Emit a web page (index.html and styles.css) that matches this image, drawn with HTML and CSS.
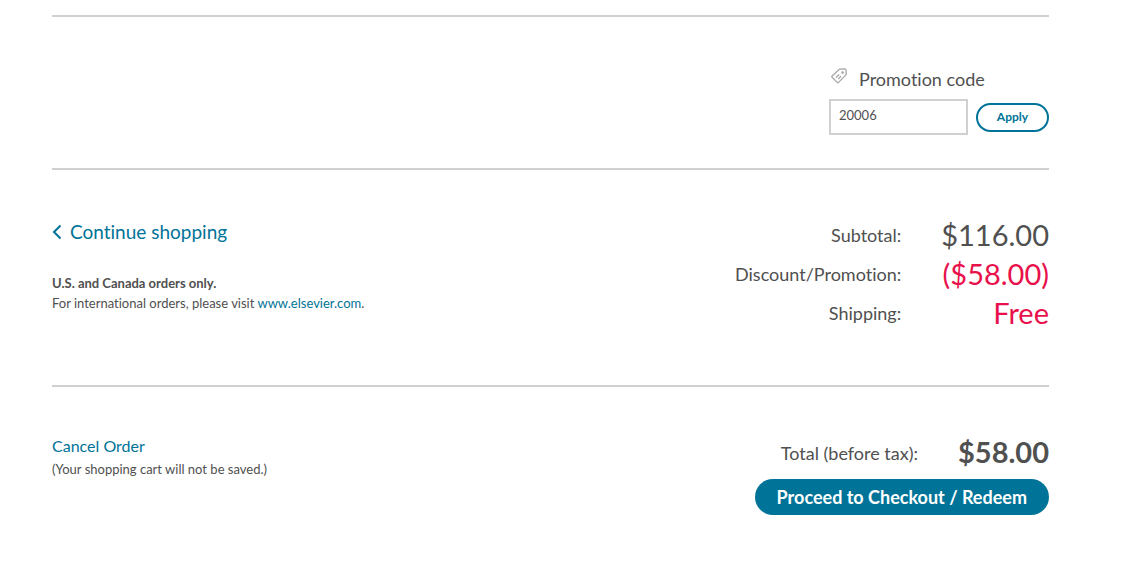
FILE: index.html
```html
<!DOCTYPE html>
<html lang="en">
<head>
    <meta charset="UTF-8">
    <title>Shopping Cart</title>
    <meta name="viewport" content="width=device-width, initial-scale=1">
    <link rel="stylesheet" href="styles.css">
</head>
<body>
<main class="cart">
    <form class="section promo">
        <div class="promo-box">
            <label class="promo-label" for="promo-code">
                <svg class="tag-icon" viewBox="0 0 16 16" aria-hidden="true">
                    <path d="M8.6 1.1 13.6.8Q14.9.8 15 2L15.2 6.6 7.6 14.4Q6.9 15.1 6.2 14.4L1.1 9.3Q.5 8.7 1.1 8Z"/>
                    <path d="M5 9.5 8.2 6.6M7.2 11 10 8.2"/>
                    <circle cx="11.6" cy="4.6" r=".7"/>
                </svg>
                Promotion code
            </label>
            <div class="promo-row">
                <input class="promo-input" type="text" id="promo-code" value="20006">
                <button class="apply-button" type="submit">Apply</button>
            </div>
        </div>
    </form>

    <section class="section summary">
        <div>
            <a class="continue" href="#">
                <svg class="chevron" viewBox="0 0 10 16" aria-hidden="true"><path d="M8.5 1.5 2 8l6.5 6.5"/></svg>
                Continue shopping
            </a>
            <p class="note"><strong>U.S. and Canada orders only.</strong><br>For international orders, please visit <a href="https://www.elsevier.com">www.elsevier.com</a>.</p>
        </div>
        <dl class="totals">
            <dt>Subtotal:</dt>
            <dd>$116.00</dd>
            <dt>Discount/Promotion:</dt>
            <dd class="saving">($58.00)</dd>
            <dt>Shipping:</dt>
            <dd class="saving">Free</dd>
        </dl>
    </section>

    <section class="section checkout">
        <div>
            <a class="cancel" href="#">Cancel Order</a>
            <p class="cancel-note">(Your shopping cart will not be saved.)</p>
        </div>
        <div class="checkout-box">
            <div class="total">
                <span>Total (before tax):</span>
                <strong class="total-price">$58.00</strong>
            </div>
            <button class="checkout-button" type="button">Proceed to Checkout / Redeem</button>
        </div>
    </section>
</main>
</body>
</html>
```
FILE: styles.css
```css
* {
    box-sizing: border-box;
}
body {
    margin: 0;
    background: #fff;
    color: #505050;
    font-family: Lato, "Open Sans", sans-serif;
    font-size: 14px;
    font-variant-ligatures: none;
    line-height: 20px;
}
a {
    color: #007398;
    text-decoration: none;
}
p, dl, dd {
    margin: 0;
}
svg {
    fill: none;
    stroke: currentColor;
}
input, button {
    font-family: inherit;
}
button {
    cursor: pointer;
}
.cart {
    margin: 15px 92px 0 52px;
}
.section {
    display: flex;
    justify-content: space-between;
    border-top: 2px solid #d0d0d0;
}
.promo {
    justify-content: flex-end;
    padding: 48px 0 33px;
}
.promo-box {
    width: 220px;
}
.promo-label {
    display: flex;
    gap: 12px;
    padding-left: 2px;
    font-size: 18px;
    line-height: 28px;
}
.tag-icon {
    width: 16px;
    height: 16px;
    margin-top: 3px;
    color: #a6a6a6;
    stroke-width: 1.3;
}
.promo-row {
    display: flex;
    align-items: center;
    gap: 8px;
    margin-top: 6px;
}
.promo-input {
    flex: 1;
    min-width: 0;
    height: 36px;
    padding: 0 8px 4px;
    border: 2px solid #d0d0d0;
    color: #505050;
    font-size: 13px;
}
.apply-button {
    width: 73px;
    height: 29px;
    padding: 0 0 2px;
    border: 2px solid #007398;
    border-radius: 15px;
    background: #fff;
    color: #007398;
    font-size: 12px;
    font-weight: bold;
}
.summary {
    padding: 46px 0 52px;
}
.continue {
    display: flex;
    align-items: center;
    gap: 8px;
    padding-top: 2px;
    font-size: 19px;
    line-height: 28px;
}
.chevron {
    width: 10px;
    height: 16px;
    stroke-width: 2;
}
.note {
    margin-top: 27px;
    font-size: 13px;
}
.totals {
    display: grid;
    grid-template-columns: auto auto;
    column-gap: 40px;
    font-size: 18px;
    line-height: 39px;
    text-align: right;
}
.totals dd {
    font-size: 29px;
    line-height: 37px;
}
.totals .saving {
    color: #e9114b;
}
.checkout {
    padding: 46px 0;
}
.cancel {
    display: block;
    padding-top: 3px;
    font-size: 16px;
    line-height: 20px;
}
.cancel-note {
    margin-top: 3px;
    font-size: 13px;
}
.checkout-box {
    text-align: right;
}
.total {
    display: flex;
    justify-content: flex-end;
    gap: 40px;
    font-size: 18px;
    line-height: 40px;
}
.total-price {
    font-size: 29px;
    line-height: 37px;
}
.checkout-button {
    height: 36px;
    margin-top: 6px;
    padding: 0 22px;
    border: 0;
    border-radius: 18px;
    background: #007398;
    color: #fff;
    font-size: 18px;
    font-weight: bold;
}
```
